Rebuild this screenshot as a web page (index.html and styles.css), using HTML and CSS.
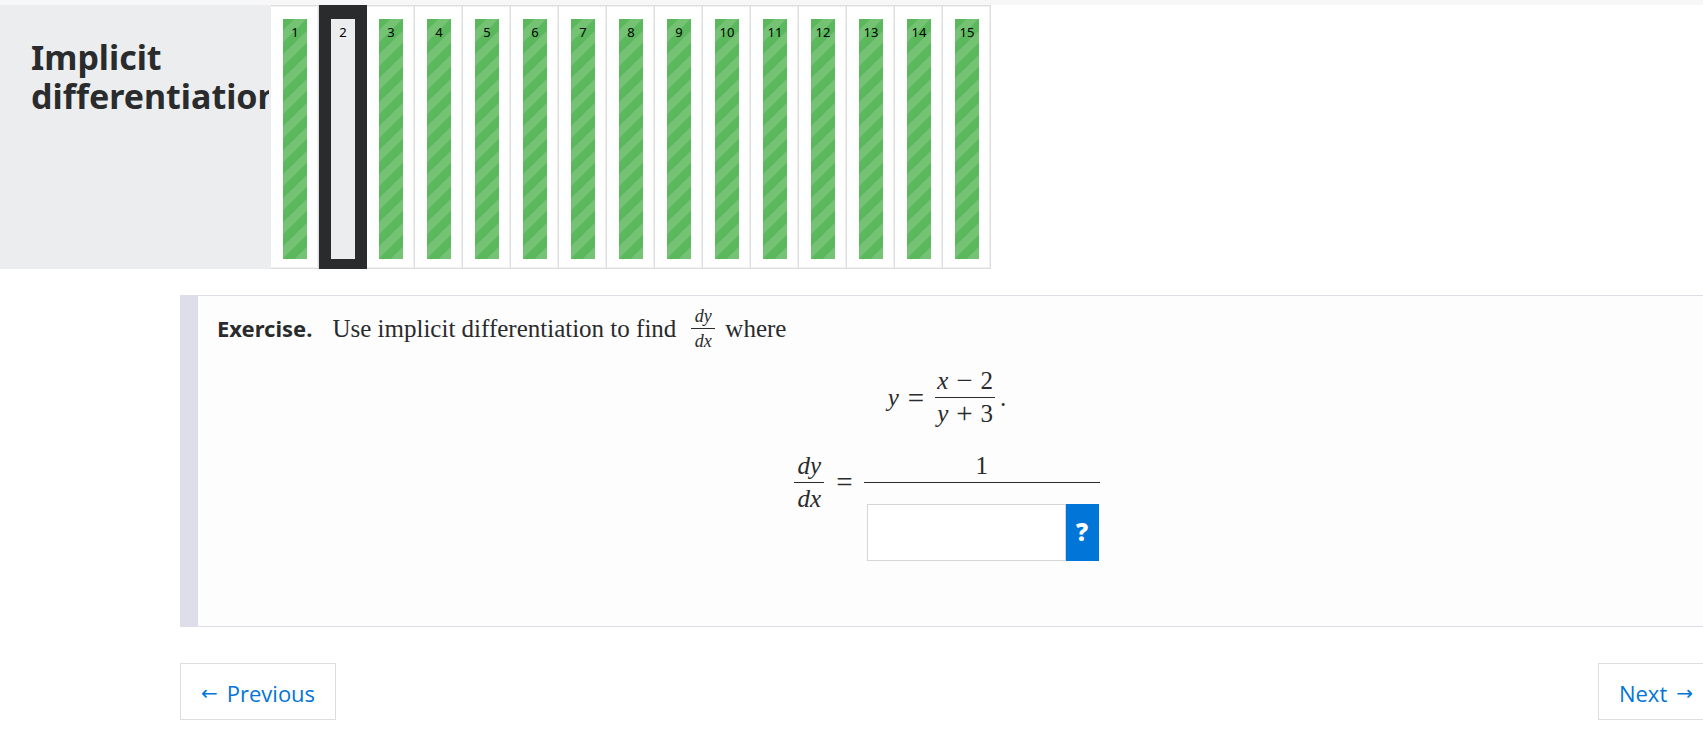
FILE: index.html
```html
<!DOCTYPE html>
<html lang="en">
<head>
<meta charset="utf-8">
<title>Implicit differentiation</title>
<link rel="stylesheet" href="styles.css">
</head>
<body>
<header class="topbar">
  <div class="title-panel"><h1 class="title">Implicit differentiation</h1></div>
  <nav class="steps" aria-label="Exercises">
    <a class="step" href="#1"><span class="bar">1</span></a>
    <a class="step current" href="#2" aria-current="page"><span class="bar">2</span></a>
    <a class="step" href="#3"><span class="bar">3</span></a>
    <a class="step" href="#4"><span class="bar">4</span></a>
    <a class="step" href="#5"><span class="bar">5</span></a>
    <a class="step" href="#6"><span class="bar">6</span></a>
    <a class="step" href="#7"><span class="bar">7</span></a>
    <a class="step" href="#8"><span class="bar">8</span></a>
    <a class="step" href="#9"><span class="bar">9</span></a>
    <a class="step" href="#10"><span class="bar">10</span></a>
    <a class="step" href="#11"><span class="bar">11</span></a>
    <a class="step" href="#12"><span class="bar">12</span></a>
    <a class="step" href="#13"><span class="bar">13</span></a>
    <a class="step" href="#14"><span class="bar">14</span></a>
    <a class="step" href="#15"><span class="bar">15</span></a>
  </nav>
</header>
<main class="content">
  <section class="exercise">
    <p class="prompt">
      <span class="lead"><strong class="label">Exercise.</strong>
      <span>Use implicit differentiation to find</span></span>
      <span class="frac small"><i class="num">dy</i><i class="den">dx</i></span>
      <span>where</span>
    </p>
    <div class="equation">
      <i>y</i><span class="rel">=</span>
      <span class="frac"><span class="num"><i>x</i><span class="op">−</span>2</span><span class="den"><i>y</i><span class="op">+</span>3</span></span>
      <span class="stop">.</span>
    </div>
    <form class="equation answer">
      <span class="frac"><i class="num">dy</i><i class="den">dx</i></span>
      <span class="rel">=</span>
      <span class="frac wide"><span class="num">1</span>
        <span class="den field"><input class="entry" type="text" aria-label="Denominator"><button class="check" type="button" aria-label="Check answer">?</button></span></span>
    </form>
  </section>
  <nav class="pager" aria-label="Pages">
    <a class="page-link" href="#prev"><span class="arrow">←</span>Previous</a>
    <a class="page-link" href="#next">Next<span class="arrow">→</span></a>
  </nav>
</main>
</body>
</html>
```
FILE: styles.css
```css
* { box-sizing: border-box; }
body {
  margin: 0;
  overflow-x: hidden;
  background: #fff;
  color: #292b2c;
  font-family: "Open Sans", "Noto Sans", sans-serif;
}
.topbar { display: flex; border-top: 5px solid #f7f7f7; }
.title-panel {
  width: 271px;
  padding: 33px 2px 0 31px;
  background: #ecedef;
}
.title {
  margin: 0;
  overflow: hidden;
  font: bold 34px/39px "Noto Sans", sans-serif;
}
.steps { display: flex; }
.step {
  width: 48px;
  padding: 13px 11px 9px 12px;
  border: solid #ddd;
  border-width: 1px 1px 1px 0;
  box-shadow: inset -1px 1px 0 #f1f1f1, inset -1px -1px 0 #f1f1f1;
  color: #000;
  text-decoration: none;
}
.bar {
  display: block;
  height: 240px;
  background: #5cb85c linear-gradient(135deg, transparent 25%, rgba(255,255,255,.15) 25%, rgba(255,255,255,.15) 50%, transparent 50%, transparent 75%, rgba(255,255,255,.15) 75%) 0 0 / 24px 24px;
  font: 13px/27px "Noto Sans", sans-serif;
  text-align: center;
}
.current { padding: 14px 12px 10px; border: 0; background: #292b2c; box-shadow: none; }
.current .bar { background: #ecedef; }
.content { margin: 26px -11px 0 180px; }
.exercise {
  padding: 8px 37px 65px 19px;
  border: solid #dedeea;
  border-width: 1px 0 1px 18px;
  background: #fdfdfd;
  font-family: "Liberation Serif", serif;
  font-size: 25px;
  line-height: 32px;
}
.prompt { display: flex; align-items: center; gap: 10px; margin: 0; }
.lead { display: flex; align-items: baseline; gap: 20px; }
.label { font: bold 22px/32px "Noto Sans", sans-serif; }
.frac { display: inline-flex; flex-direction: column; align-items: stretch; min-width: 30px; text-align: center; }
.num, .den { padding: 0 2px; white-space: nowrap; }
.num { border-bottom: 1px solid #292b2c; }
.small { min-width: 24px; margin-left: 5px; font-size: 18px; line-height: 24px; }
.equation { display: flex; justify-content: center; align-items: center; margin-top: 12px; }
.rel { margin: 0 11px 0 9px; font-size: 29px; }
.op { margin: 0 8px; font-size: 29px; line-height: 30px; vertical-align: -1px; }
.stop { margin-left: 5px; }
.answer { align-items: flex-start; margin-top: 20px; }
.answer > .rel { margin: 16px 11px 0 12px; }
.wide { width: 236px; }
.field { display: flex; padding: 21px 1px 0 3px; }
.entry {
  flex: 1;
  min-width: 0;
  height: 57px;
  border: 1px solid #d5d5d5;
  background: #fff;
  font-size: 24px;
}
.check {
  width: 33px;
  height: 57px;
  padding: 0 0 2px;
  border: 0;
  background: #0275d8;
  color: #fff;
  font: 800 24px "Open Sans", sans-serif;
}
.pager { display: flex; justify-content: space-between; margin-top: 36px; }
.page-link {
  display: flex;
  align-items: center;
  gap: 9px;
  padding: 13px 20px 10px;
  border: 1px solid #ddd;
  color: #0275d8;
  font-size: 22px;
  line-height: 32px;
  text-decoration: none;
}
.arrow { font: 20px/32px "DejaVu Sans", sans-serif; }
```
